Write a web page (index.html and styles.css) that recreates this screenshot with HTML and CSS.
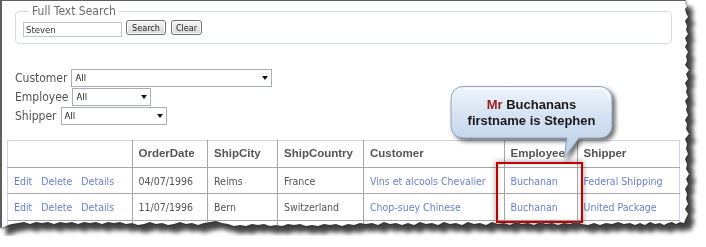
FILE: index.html
```html
<!DOCTYPE html>
<html lang="en">
<head>
    <meta charset="UTF-8">
    <title>Orders</title>
    <link rel="stylesheet" href="styles.css">
</head>
<body>
    <div class="shot">
        <div class="page">
            <fieldset class="search">
                <legend>Full Text Search</legend>
                <div class="search-row">
                    <input class="search-box" type="text" value="Steven">
                    <button class="btn btn-search">Search</button>
                    <button class="btn btn-clear">Clear</button>
                </div>
            </fieldset>

            <div class="filters">
                <div class="filter"><label>Customer</label><span class="select select-customer">All</span></div>
                <div class="filter"><label>Employee</label><span class="select select-employee">All</span></div>
                <div class="filter"><label>Shipper</label><span class="select select-shipper">All</span></div>
            </div>

            <table class="grid">
                <colgroup>
                    <col style="width: 124.5px">
                    <col style="width: 75.5px">
                    <col style="width: 70px">
                    <col style="width: 86px">
                    <col style="width: 140.5px">
                    <col style="width: 73px">
                    <col style="width: 102.5px">
                </colgroup>
                <tr>
                    <th></th>
                    <th>OrderDate</th>
                    <th>ShipCity</th>
                    <th>ShipCountry</th>
                    <th>Customer</th>
                    <th>Employee</th>
                    <th>Shipper</th>
                </tr>
                <tr>
                    <td><a href="#">Edit</a> <a href="#">Delete</a> <a href="#">Details</a></td>
                    <td>04/07/1996</td>
                    <td>Reims</td>
                    <td>France</td>
                    <td><a href="#">Vins et alcools Chevalier</a></td>
                    <td><a href="#">Buchanan</a></td>
                    <td><a href="#">Federal Shipping</a></td>
                </tr>
                <tr>
                    <td><a href="#">Edit</a> <a href="#">Delete</a> <a href="#">Details</a></td>
                    <td>11/07/1996</td>
                    <td>Bern</td>
                    <td>Switzerland</td>
                    <td><a href="#">Chop-suey Chinese</a></td>
                    <td><a href="#">Buchanan</a></td>
                    <td><a href="#">United Package</a></td>
                </tr>
                <tr>
                    <td>&nbsp;</td>
                    <td>&nbsp;</td>
                    <td>&nbsp;</td>
                    <td>&nbsp;</td>
                    <td>&nbsp;</td>
                    <td>&nbsp;</td>
                    <td>&nbsp;</td>
                </tr>
            </table>

            <!-- annotation overlays -->
            <div class="highlight"></div>
            <div class="callout">
                <svg class="callout-shape" width="176" height="84" viewBox="0 0 176 84">
                    <defs>
                        <linearGradient id="bubbleFill" x1="0" y1="0" x2="0" y2="1">
                            <stop offset="0" stop-color="#eef4fb"/>
                            <stop offset="0.45" stop-color="#d3e1f2"/>
                            <stop offset="1" stop-color="#b9cde6"/>
                        </linearGradient>
                    </defs>
                    <path d="M17 4.5H154A12 12 0 0 1 166 16.5V44A12 12 0 0 1 154 56H133L118 76L121 56H17A12 12 0 0 1 5 44V16.5A12 12 0 0 1 17 4.5Z"
                          fill="url(#bubbleFill)" stroke="#8ea3bf" stroke-width="1"/>
                    <path d="M18 6.5H153A10 10 0 0 1 163 16.5" fill="none" stroke="#ffffff" stroke-opacity="0.8" stroke-width="1.5"/>
                </svg>
                <div class="callout-text"><span class="title">Mr</span> Buchanans<br>firstname is Stephen</div>
            </div>
        </div>
    </div>
</body>
</html>
```

FILE: styles.css
```css
body {
    margin: 0;
    background: #fff;
    font-family: "DejaVu Sans Condensed", "Liberation Sans", Arial, sans-serif;
    color: #555;
}
.shot {
    width: 692px;
    height: 236px;
    filter: drop-shadow(6px 7px 2px rgba(0, 0, 0, 0.62)) drop-shadow(1px 1px 1px rgba(0, 0, 0, 0.5));
}
.page {
    position: relative;
    width: 692px;
    height: 236px;
    box-sizing: border-box;
    background: #fff;
    border-top: 1px solid #5f5f5f;
    border-left: 2px solid #5f5f5f;
    overflow: hidden;
    clip-path: polygon(0 0, 686px 0, 685px 3px, 687px 6px, 685px 9px, 686px 13px, 688px 17px, 685px 21px, 687px 26px, 686px 30px, 688px 34px, 685px 38px, 687px 43px, 685px 47px, 688px 52px, 686px 56px, 687px 61px, 685px 65px, 689px 70px, 686px 74px, 688px 79px, 685px 83px, 687px 88px, 686px 92px, 688px 97px, 685px 101px, 687px 106px, 686px 110px, 688px 115px, 685px 120px, 687px 124px, 686px 129px, 689px 134px, 685px 139px, 687px 144px, 686px 149px, 688px 154px, 685px 159px, 687px 164px, 686px 169px, 689px 174px, 686px 179px, 688px 184px, 685px 189px, 687px 194px, 686px 199px, 688px 204px, 685px 209px, 688px 214px, 686px 218px, 684px 223px, 680px 222px, 676px 224px, 672px 222px, 668px 223px, 664px 225px, 660px 223px, 655px 224px, 650px 222px, 645px 225px, 640px 223px, 635px 225px, 630px 223px, 624px 224px, 618px 222px, 612px 224px, 606px 223px, 600px 225px, 594px 223px, 588px 225px, 582px 224px, 576px 222px, 570px 224px, 564px 223px, 558px 225px, 552px 223px, 546px 224px, 540px 222px, 534px 225px, 528px 223px, 522px 224px, 516px 222px, 510px 225px, 504px 223px, 498px 224px, 492px 222px, 486px 225px, 480px 223px, 474px 224px, 468px 222px, 462px 225px, 456px 223px, 450px 224px, 444px 222px, 438px 225px, 432px 223px, 426px 224px, 420px 222px, 414px 225px, 408px 223px, 402px 225px, 396px 223px, 390px 224px, 384px 222px, 378px 225px, 372px 223px, 366px 224px, 360px 223px, 354px 225px, 348px 224px, 342px 226px, 336px 224px, 330px 225px, 324px 224px, 318px 226px, 312px 225px, 306px 226px, 300px 224px, 294px 225px, 288px 224px, 282px 226px, 276px 225px, 270px 226px, 264px 224px, 258px 225px, 252px 224px, 246px 226px, 240px 225px, 234px 226px, 228px 224px, 222px 223px, 216px 221px, 210px 222px, 204px 223px, 198px 225px, 192px 223px, 186px 224px, 180px 222px, 174px 224px, 168px 225px, 162px 223px, 156px 224px, 150px 222px, 144px 224px, 138px 225px, 132px 223px, 126px 224px, 120px 222px, 114px 223px, 108px 222px, 102px 224px, 96px 222px, 90px 223px, 84px 222px, 78px 224px, 72px 222px, 66px 223px, 60px 222px, 54px 224px, 48px 222px, 42px 223px, 36px 222px, 30px 224px, 24px 222px, 18px 223px, 12px 224px, 8px 225px, 4px 227px, 0 228px);
}

/* full text search box */
.search {
    width: 657px;
    box-sizing: border-box;
    margin: 3px 0 0 13px;
    padding: 2px 7px 6px;
    border: 1px solid #d3dbe3;
    border-radius: 4px;
}
.search legend {
    margin-left: 6px;
    padding: 0 3px;
    font-size: 12px;
    line-height: 14px;
    color: #6a6a6a;
}
.search-row {
    display: flex;
    align-items: flex-start;
}
.search-box {
    width: 99px;
    height: 15px;
    box-sizing: border-box;
    margin: 2px 4px 0 0;
    padding: 0 2px;
    border: 1px solid #c6c6c6;
    font-family: inherit;
    font-size: 9.5px;
    color: #333;
}
.btn {
    height: 15px;
    box-sizing: border-box;
    margin-right: 5px;
    padding: 0;
    border: 1px solid #707070;
    border-radius: 3px;
    background: linear-gradient(#f5f5f5, #d8d8d8);
    box-shadow: inset 0 0 0 1px #fbfbfb;
    font-family: inherit;
    font-size: 9px;
    color: #222;
}
.btn-search {
    width: 40px;
}
.btn-clear {
    width: 31px;
}

/* dropdown filters */
.filters {
    margin: 24px 0 0 13px;
}
.filter {
    display: flex;
    align-items: center;
    gap: 4px;
    height: 19px;
}
.filter label {
    font-size: 12px;
    color: #555;
}
.select {
    position: relative;
    height: 18px;
    box-sizing: border-box;
    padding-left: 3px;
    border: 1px solid #a9aeb5;
    background: #fff;
    font-size: 9.5px;
    line-height: 16px;
    color: #222;
}
.select::after {
    content: "";
    position: absolute;
    right: 3px;
    top: 6px;
    border-left: 3.5px solid transparent;
    border-right: 3.5px solid transparent;
    border-top: 4px solid #111;
}
.select-customer {
    width: 201px;
}
.select-employee {
    width: 79px;
}
.select-shipper {
    width: 106px;
}

/* orders grid */
.grid {
    width: 672px;
    margin: 15px 0 0 5px;
    border-collapse: collapse;
    table-layout: fixed;
    font-size: 10.5px;
}
.grid th,
.grid td {
    padding: 6px;
    border: 1px solid #a7a7a7;
    line-height: 13.5px;
    text-align: left;
    white-space: nowrap;
    overflow: hidden;
}
.grid th {
    border-top-color: #d2d2f0;
    font-family: "Liberation Sans", Arial, sans-serif;
    font-size: 11.5px;
    font-weight: bold;
    color: #555;
}
.grid th:first-child,
.grid td:first-child {
    border-left-color: #d2d2f0;
}
.grid th:last-child,
.grid td:last-child {
    border-right-color: #d2d2f0;
}
.grid td {
    padding-top: 7px;
    padding-bottom: 5px;
    color: #555;
}
.grid a {
    color: #6b7fcc;
    text-decoration: none;
    margin-right: 6px;
}

/* annotation */
.highlight {
    position: absolute;
    left: 493.7px;
    top: 160.7px;
    width: 87.6px;
    height: 61.6px;
    box-sizing: border-box;
    border: 2px solid #c00000;
    box-shadow: 0 0 5px 1px rgba(0, 0, 0, 0.3), inset 0 0 4px rgba(0, 0, 0, 0.2);
}
.callout {
    position: absolute;
    left: 444px;
    top: 81px;
    width: 176px;
    height: 84px;
}
.callout-shape {
    position: absolute;
    left: 0;
    top: 0;
    filter: drop-shadow(3px 3px 2px rgba(0, 0, 0, 0.55));
}
.callout-text {
    position: absolute;
    left: 5px;
    top: 14.5px;
    width: 161px;
    text-align: center;
    font-family: "Liberation Sans", Arial, sans-serif;
    font-size: 13px;
    font-weight: bold;
    line-height: 16.5px;
    color: #1a1a1a;
}
.callout-text .title {
    color: #9b1b1b;
}
```
